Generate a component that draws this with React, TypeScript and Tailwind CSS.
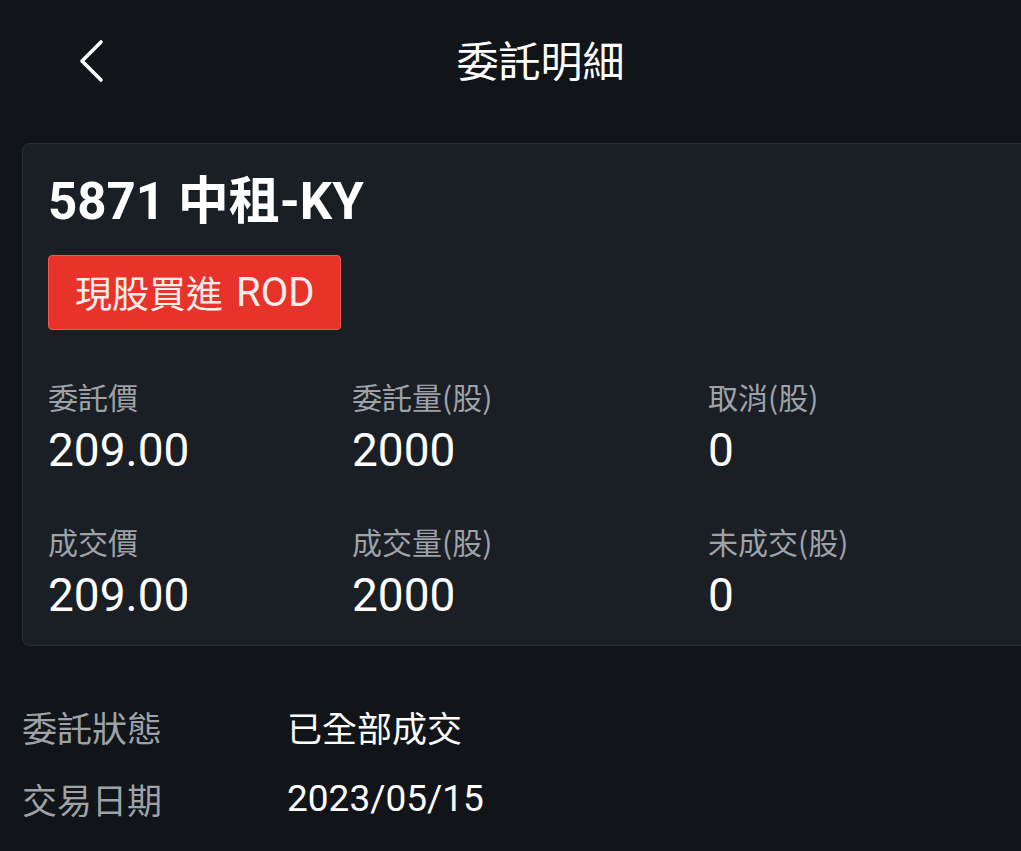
const latin = "font-['Roboto','Noto_Sans_CJK_TC',sans-serif]";
const cjk = "font-['Noto_Sans_CJK_TC','Roboto',sans-serif]";

const stats = [
  { label: '委託價', value: '209.00' },
  { label: '委託量(股)', value: '2000' },
  { label: '取消(股)', value: '0' },
  { label: '成交價', value: '209.00' },
  { label: '成交量(股)', value: '2000' },
  { label: '未成交(股)', value: '0' },
];

const info = [
  { label: '委託狀態', value: '已全部成交', num: false },
  { label: '交易日期', value: '2023/05/15', num: true },
];

function BackIcon() {
  return (
    <svg width="30" height="44" viewBox="0 0 30 44" fill="none">
      <polyline
        points="23,3 4,22 23,41"
        stroke="#ffffff"
        strokeWidth="3.6"
        strokeLinecap="round"
        strokeLinejoin="round"
      />
    </svg>
  );
}

export default function App() {
  return (
    <div className="min-h-[851px] w-[1021px] overflow-hidden bg-[#111419] text-white">
      {/* ヘッダー */}
      <header className="grid h-[124px] grid-cols-[140px_1fr_80px] items-center">
        <div className="pl-[78px] pb-[2px]">
          <BackIcon />
        </div>
        <h1 className={`${cjk} pb-[6px] text-center text-[42px] leading-[42px] font-normal text-white`}>
          委託明細
        </h1>
        <div />
      </header>

      {/* 委託カード */}
      <section className="mt-[19px] ml-[22px] mr-[-14px] rounded-[8px] border border-[#2a3039] bg-[#1a1e25] pt-[32px] pb-[26px] pl-[25px]">
        <h2 className={`${latin} text-[51px] leading-[52px] font-bold text-white`}>5871 中租-KY</h2>

        <div
          className={`${cjk} mt-[27px] flex h-[75px] w-[293px] items-center rounded-[4px] border border-[#f0584f] bg-[#e8332a] pl-[26px] text-[37px] leading-[37px] text-[#fdeeec]`}
        >
          現股買進 <span className={`${latin} ml-[13px] text-[40px]`}>ROD</span>
        </div>

        <div className="mt-[51px] grid grid-cols-[304px_356px_1fr] gap-y-[52px]">
          {stats.map((s) => (
            <div key={s.label} className="flex flex-col">
              <span className={`${cjk} text-[30px] leading-[30px] text-[#9ea2a7]`}>{s.label}</span>
              <span className={`${latin} mt-[16px] text-[46px] leading-[47px] text-white`}>{s.value}</span>
            </div>
          ))}
        </div>
      </section>

      {/* 詳細 */}
      <div className="mt-[64px] flex flex-col gap-[38px] pl-[22px]">
        {info.map((r) => (
          <div key={r.label} className="grid h-[34px] grid-cols-[265px_1fr] items-center">
            <span className={`${cjk} text-[35px] leading-[34px] text-[#9ea2a7]`}>{r.label}</span>
            <span
              className={`${r.num ? `${latin} text-[37px]` : `${cjk} text-[35px]`} leading-[34px] text-white`}
            >
              {r.value}
            </span>
          </div>
        ))}
      </div>
    </div>
  );
}
